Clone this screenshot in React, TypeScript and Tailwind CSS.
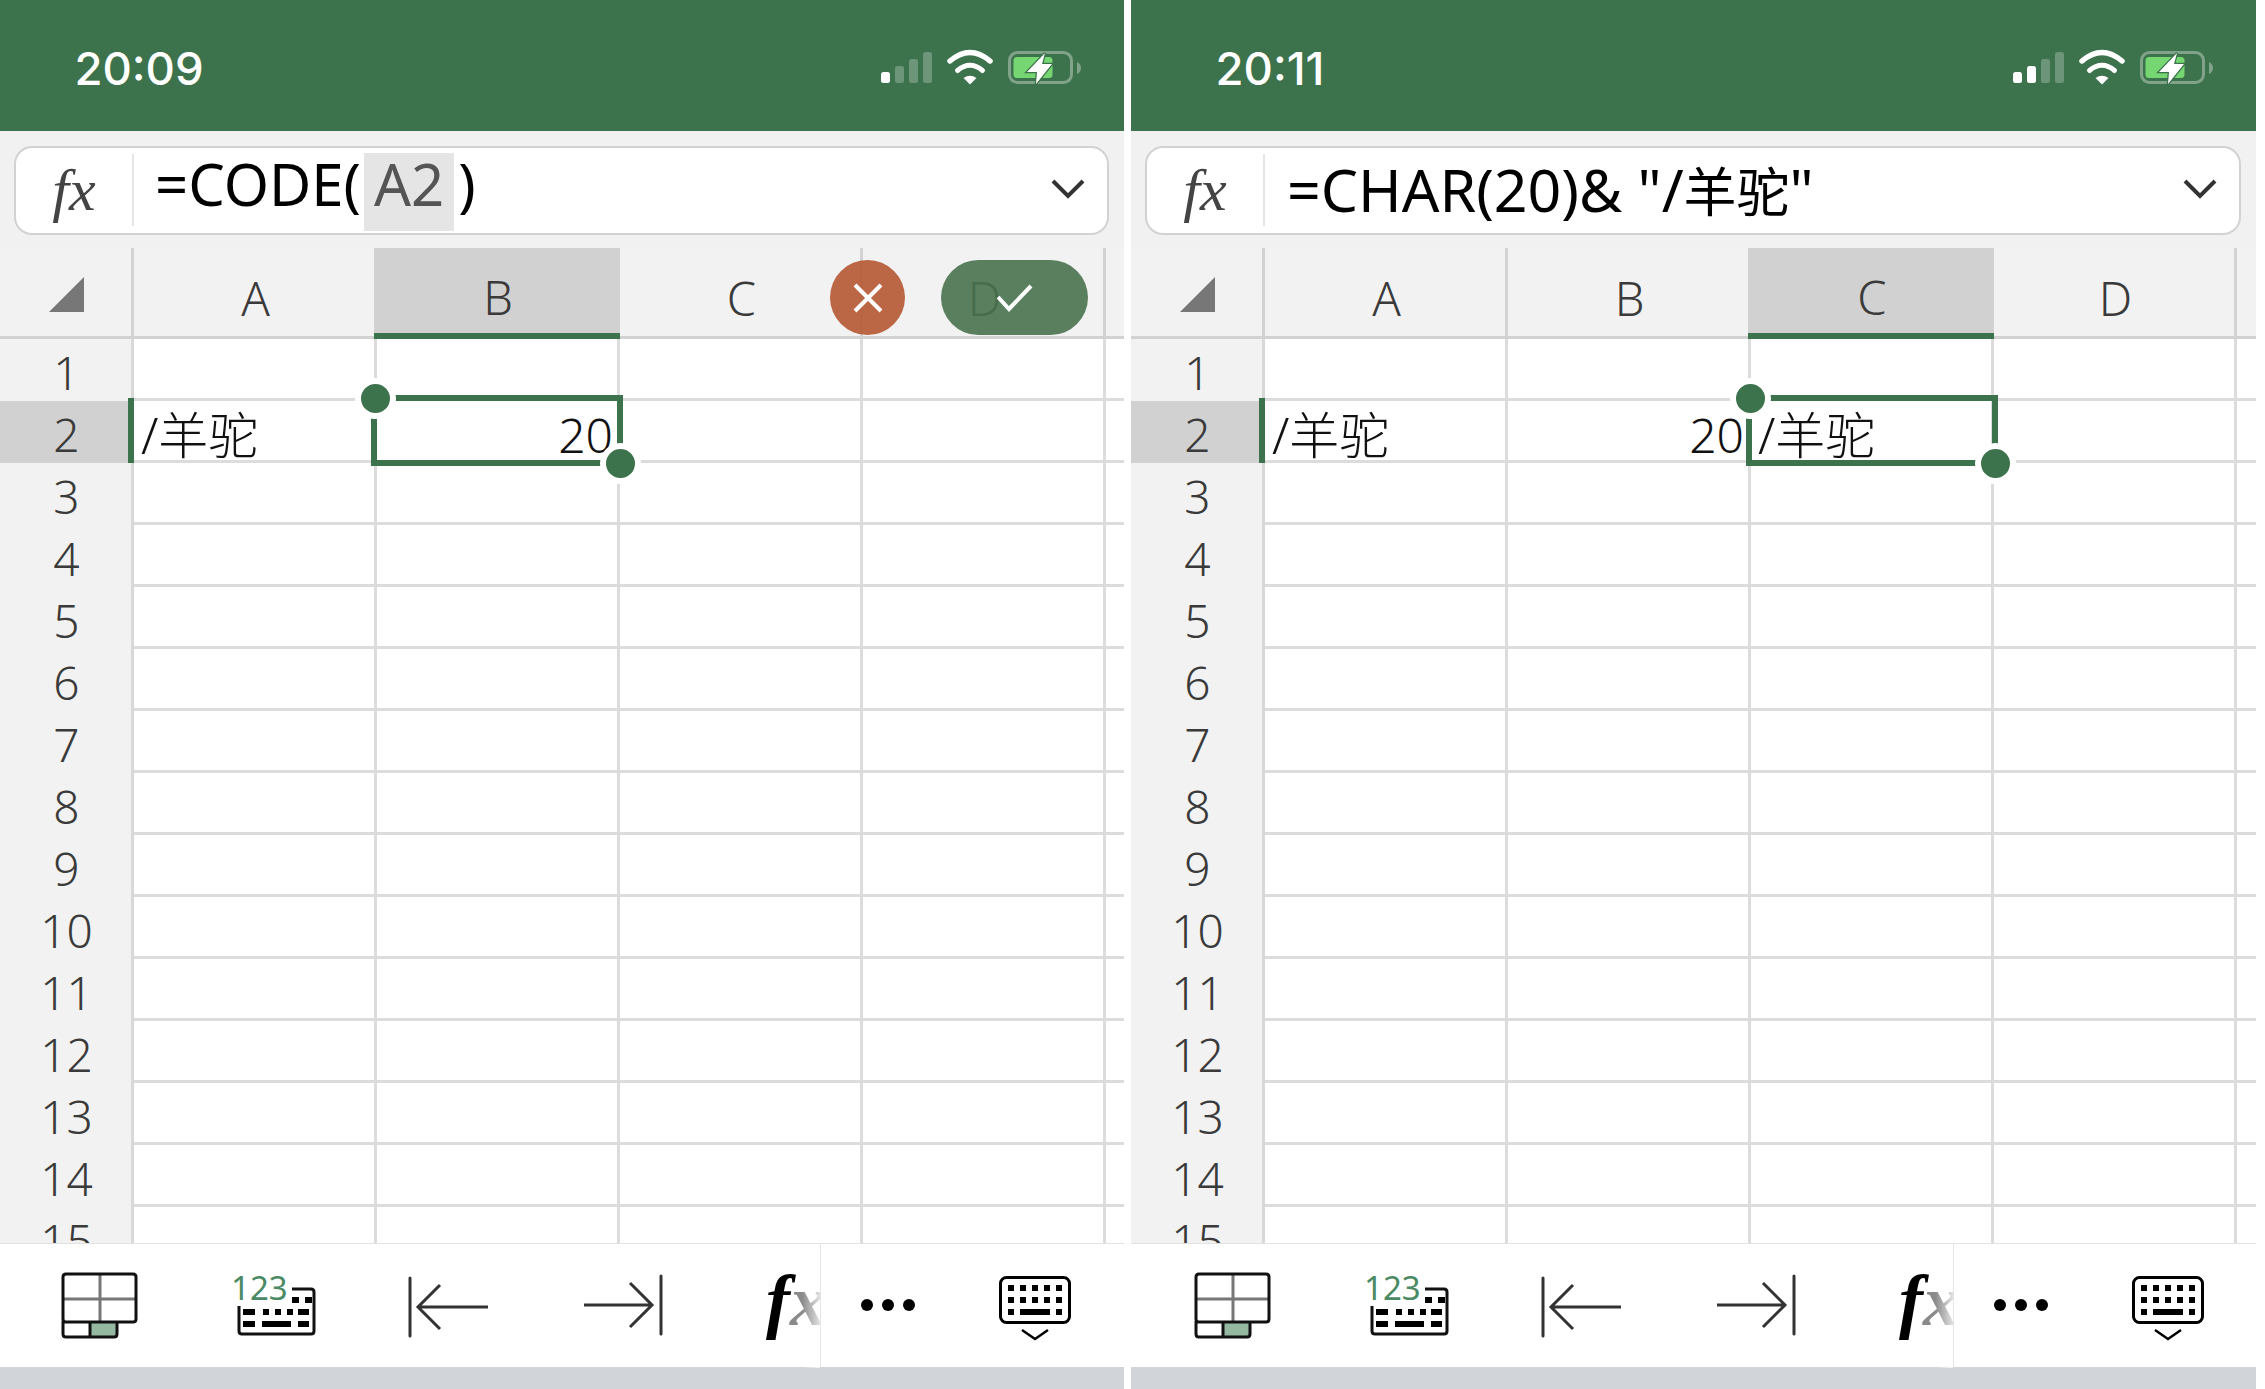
const GREEN = '#3c724c';

function StatusIcons({ bars }: { bars: number }) {
  const xs = [881, 895, 909, 923];
  const tops = [72, 66, 59, 52];
  return (
    <svg width="206" height="40" viewBox="878 48 206 40" className="mt-[48px] ml-auto mr-[40px] shrink-0">
      {xs.map((x, i) => (
        <rect key={x} x={x} y={tops[i]} width="9" height={83 - tops[i]} rx="2.5" fill="#fff" fillOpacity={i < bars ? 1 : 0.25} />
      ))}
      <path d="M950 61Q970 44 990 61" fill="none" stroke="#fff" strokeWidth="5.5" strokeLinecap="round" />
      <path d="M957.5 70.5Q970 60 982.5 70.5" fill="none" stroke="#fff" strokeWidth="5" strokeLinecap="round" />
      <path d="M963.5 78Q970 73.5 976.5 78L970 84.5Z" fill="#fff" />
      <rect x="1009.5" y="52.5" width="62" height="30" rx="8" fill="none" stroke="#fff" strokeOpacity="0.35" strokeWidth="3" />
      <rect x="1013.5" y="57" width="39" height="21" rx="3.5" fill="#76d672" />
      <path d="M1077 62Q1081 64 1081 68Q1081 72 1077 74Z" fill="#fff" fillOpacity="0.35" />
      <path d="M1045 53L1027 72H1037L1036 84L1052 64H1042Z" fill="#fff" stroke={GREEN} strokeWidth="2.5" paintOrder="stroke" />
    </svg>
  );
}

function Chevron() {
  return (
    <svg width="36" height="22" viewBox="0 0 36 22" className="shrink-0 -mt-[4px]">
      <path d="M3 3L18 18L33 3" fill="none" stroke="#333" strokeWidth="4" />
    </svg>
  );
}

function GridIcon() {
  return (
    <svg width="78" height="124" viewBox="60 1243 78 124" className="ml-[60px] shrink-0">
      <rect x="91" y="1322" width="27" height="14" fill="#94b8a0" />
      <path d="M100 1273V1321M63 1298H136" stroke="#777" strokeWidth="3" />
      <path d="M66 1273H133Q136 1273 136 1276V1318Q136 1321 133 1321H66Q63 1321 63 1318V1276Q63 1273 66 1273ZM63 1320V1333Q63 1336 66 1336H114Q117 1336 117 1333V1321M90 1321V1336" fill="none" stroke="#111" strokeWidth="3" />
    </svg>
  );
}

function NumKeyboardIcon() {
  return (
    <div className="relative ml-[94px] w-[84px] h-[124px] shrink-0">
      <span className="absolute -left-[1px] top-[24px] text-[33px] leading-[40px] text-[#4a8a64]">123</span>
      <svg width="84" height="124" viewBox="232 1243 84 124" className="absolute left-0 top-0">
        <path d="M292 1288H311Q314 1288 314 1291V1330Q314 1333 311 1333H242Q239 1333 239 1330V1305" fill="none" stroke="#111" strokeWidth="3" />
        <path d="M292 1296H299V1302H292ZM305 1296H312V1302H305ZM243 1308H255V1314H243ZM263 1308H269V1314H263ZM275 1308H281V1314H275ZM287 1308H293V1314H287ZM298 1308H309V1314H298ZM243 1320H255V1326H243ZM262 1320H291V1326H262ZM298 1320H309V1326H298Z" fill="#000" />
      </svg>
    </div>
  );
}

function ArrowLeftIcon() {
  return (
    <svg width="82" height="124" viewBox="408 1243 82 124" className="ml-[92px] shrink-0">
      <path d="M410 1277V1335" stroke="#333" strokeWidth="3" strokeLinecap="round" />
      <path d="M488 1306H419M440 1284L418 1306L440 1328" fill="none" stroke="#333" strokeWidth="3" />
    </svg>
  );
}

function ArrowRightIcon() {
  return (
    <svg width="80" height="124" viewBox="584 1243 80 124" className="ml-[93px] shrink-0">
      <path d="M662 1275V1333" stroke="#333" strokeWidth="3" strokeLinecap="round" />
      <path d="M585 1304H652M631 1282L653 1304L631 1326" fill="none" stroke="#333" strokeWidth="3" />
    </svg>
  );
}

function DotsIcon() {
  return (
    <svg width="56" height="124" viewBox="859 1243 56 124" className="ml-[39px] shrink-0">
      <circle cx="866" cy="1304" r="6" fill="#000" />
      <circle cx="887" cy="1304" r="6" fill="#000" />
      <circle cx="908" cy="1304" r="6" fill="#000" />
    </svg>
  );
}

function KeyboardIcon() {
  const keyXs = [1007, 1019, 1031, 1043, 1055];
  return (
    <svg width="76" height="124" viewBox="996 1243 76 124" className="ml-[81px] shrink-0">
      <rect x="999.5" y="1276.5" width="69" height="45" rx="6" fill="none" stroke="#000" strokeWidth="3" />
      {keyXs.map((x) => (
        <g key={x}>
          <rect x={x} y="1284" width="6" height="6" />
          <rect x={x} y="1296" width="6" height="6" />
        </g>
      ))}
      <rect x="1007" y="1308" width="6" height="6" />
      <rect x="1019" y="1308" width="30" height="6" />
      <rect x="1055" y="1308" width="6" height="6" />
      <path d="M1021 1329L1034 1338L1047 1329" fill="none" stroke="#000" strokeWidth="2.5" />
    </svg>
  );
}

function Handle({ className }: { className: string }) {
  return <div className={`absolute w-[41px] h-[41px] rounded-full border-[6px] border-white bg-[#3c724c] ${className}`} />;
}

interface PhoneProps {
  time: string;
  bars: number;
  formula: React.ReactNode;
  selected: number;
  cells: (string | null)[];
  selectionClass: string;
  toolbarClass?: string;
  overlay?: boolean;
  className: string;
}

const COLUMNS = ['A', 'B', 'C', 'D'];
const ROWS = Array.from({ length: 15 }, (_, i) => i + 1);

function Phone({ time, bars, formula, selected, cells, selectionClass, toolbarClass = '', overlay, className }: PhoneProps) {
  return (
    <div className={`flex flex-col h-[1389px] shrink-0 ${className}`}>
      {/* status bar */}
      <div className="flex h-[131px] bg-[#3c724c] shrink-0">
        <div className="w-[278px] pt-[47px] text-center text-[45.5px] leading-[43px] font-medium text-white font-['Inter',sans-serif]">{time}</div>
        <StatusIcons bars={bars} />
      </div>

      {/* formula bar */}
      <div className="h-[117px] pl-[14px] pr-[15px] pt-[15px] bg-[#f1f1f1] shrink-0">
        <div className="flex items-center h-[89px] bg-white border-2 border-[#d2d2d2] rounded-[18px]">
          <div className="flex items-center justify-center w-[118px] h-[72px] -mt-[2px] border-r-2 border-[#e5e5e5] text-[60px] text-[#444] italic font-['Liberation_Serif',serif] shrink-0">
            fx
          </div>
          <div className="flex items-center flex-1 pl-[21px] min-w-0">{formula}</div>
          <div className="mr-[21px]">
            <Chevron />
          </div>
        </div>
      </div>

      {/* column headers */}
      <div className="relative flex h-[91px] bg-[#f2f2f2] shrink-0">
        <div className="flex items-end w-[134px] border-r-[3px] border-b-[3px] border-[#d2d2d2] shrink-0">
          <svg width="36" height="36" viewBox="0 0 36 36" className="ml-[48px] mb-[23px]">
            <path d="M1 35L36 0V35Z" fill="#777" />
          </svg>
        </div>
        {COLUMNS.map((c, i) =>
          i === selected ? (
            <div
              key={c}
              className="flex items-center justify-center w-[246px] -ml-[3px] pt-[13px] pl-[2px] bg-[#d1d1d1] border-b-[6px] border-[#3c724c] text-[47px] font-light text-[#3a3a3a] shrink-0 relative"
            >
              {c}
            </div>
          ) : (
            <div
              key={c}
              className="flex items-center justify-center w-[243px] pt-[13px] pl-[3px] border-r-[3px] border-b-[3px] border-[#d2d2d2] text-[47px] font-light text-[#3a3a3a] shrink-0"
            >
              {c}
            </div>
          ),
        )}
        <div className="flex-1 border-b-[3px] border-[#d2d2d2]" />
        {overlay && (
          <>
            <div className="absolute left-[830px] top-[12px] flex items-center justify-center w-[75px] h-[75px] rounded-full bg-[#b55732]/90">
              <svg width="32" height="32" viewBox="0 0 32 32">
                <path d="M3 3L29 29M29 3L3 29" stroke="#fff" strokeWidth="4" />
              </svg>
            </div>
            <div className="absolute left-[941px] top-[12px] flex items-center pl-[56px] w-[147px] h-[75px] rounded-full bg-[#49724e]/90">
              <svg width="36" height="28" viewBox="0 0 36 28">
                <path d="M1 13L12 25L34 2" fill="none" stroke="#fff" strokeWidth="4" />
              </svg>
            </div>
          </>
        )}
      </div>

      {/* sheet */}
      <div className="relative flex-1 overflow-hidden bg-white">
        {ROWS.map((r) => (
          <div key={r} className="flex h-[62px] border-b-[3px] border-[#dcdcdc]">
            <div
              className={`relative flex items-center justify-center w-[134px] h-[62px] -mb-[3px] pt-[5px] border-r-[3px] text-[46px] font-light text-[#3a3a3a] shrink-0 ${
                r === 2 ? 'bg-[#d1d1d1] border-[#d1d1d1]' : 'bg-[#f2f2f2] border-[#d8d8d8]'
              }`}
            >
              <span className="pl-[2px]">{r}</span>
              {r === 2 && <div className="absolute right-[-3px] -top-[3px] w-[6px] h-[65px] bg-[#3c724c]" />}
            </div>
            {COLUMNS.map((c, i) => (
              <div
                key={c}
                className={`flex items-center w-[243px] border-r-[3px] border-[#dcdcdc] shrink-0 font-light text-[#111] whitespace-nowrap ${
                  cells[i] === '20' ? 'justify-end pr-[4px] text-[48px]' : 'pl-[7px] text-[50px]'
                }`}
              >
                {r === 2 && cells[i] !== null && <span className="pt-[9px]">{cells[i]}</span>}
              </div>
            ))}
          </div>
        ))}
        <div className={`absolute top-[56px] h-[71px] border-[6px] border-[#3c724c] ${selectionClass}`}>
          <Handle className="-left-[22.5px] -top-[23.5px]" />
          <Handle className="-right-[23.5px] -bottom-[23.5px]" />
        </div>
      </div>

      {/* bottom toolbar */}
      <div className={`flex h-[124px] bg-white border-t border-[#e2e2e2] shrink-0 ${toolbarClass}`}>
        <div className="flex w-[820px] h-[124px] shrink-0 overflow-hidden">
          <GridIcon />
          <NumKeyboardIcon />
          <ArrowLeftIcon />
          <ArrowRightIcon />
          <div className="relative ml-[103px] flex-1 pt-[17px] text-[72px] leading-[80px] font-bold italic text-black font-['Liberation_Serif',serif]">
            f<span className="text-[#8a8a8a]">x</span>
            <div className="absolute right-0 top-0 bottom-0 w-[24px] bg-linear-to-l from-white to-transparent" />
          </div>
        </div>
        <div className="flex flex-1 border-l border-[#e5e5e5]">
          <DotsIcon />
          <KeyboardIcon />
        </div>
      </div>
      <div className="h-[22px] bg-[#d1d4d9] shrink-0" />
    </div>
  );
}

export default function App() {
  return (
    <div className="flex w-[2265px] h-[1389px] gap-[7px] bg-white overflow-hidden font-['Noto_Sans','Noto_Sans_CJK_SC',sans-serif]">
      <Phone
        className="w-[1124px]"
        time="20:09"
        bars={1}
        selected={1}
        cells={['/羊驼', '20', null, null]}
        selectionClass="left-[371px] w-[252px]"
        overlay
        formula={
          <div className="flex items-center text-[58px] leading-[78px] text-black">
            <span className="-mt-[14px]">=CODE(</span>
            <span className="h-[78px] px-[10px] ml-[3px] mt-[2px] bg-[#e5e5e5] text-[#555] leading-[62px]">A2</span>
            <span className="ml-[4px] -mt-[14px]">)</span>
          </div>
        }
      />
      <Phone
        className="w-[1125px]"
        time="20:11"
        bars={2}
        selected={2}
        cells={['/羊驼', '20', '/羊驼', null]}
        selectionClass="left-[615px] w-[252px]"
        toolbarClass="pl-[2px]"
        formula={
          <div className="pl-[1px] text-[59px] leading-[78px] text-black whitespace-nowrap">
            =CHAR(20)&amp; "/<span className="text-[53px]">羊驼</span>"
          </div>
        }
      />
    </div>
  );
}
